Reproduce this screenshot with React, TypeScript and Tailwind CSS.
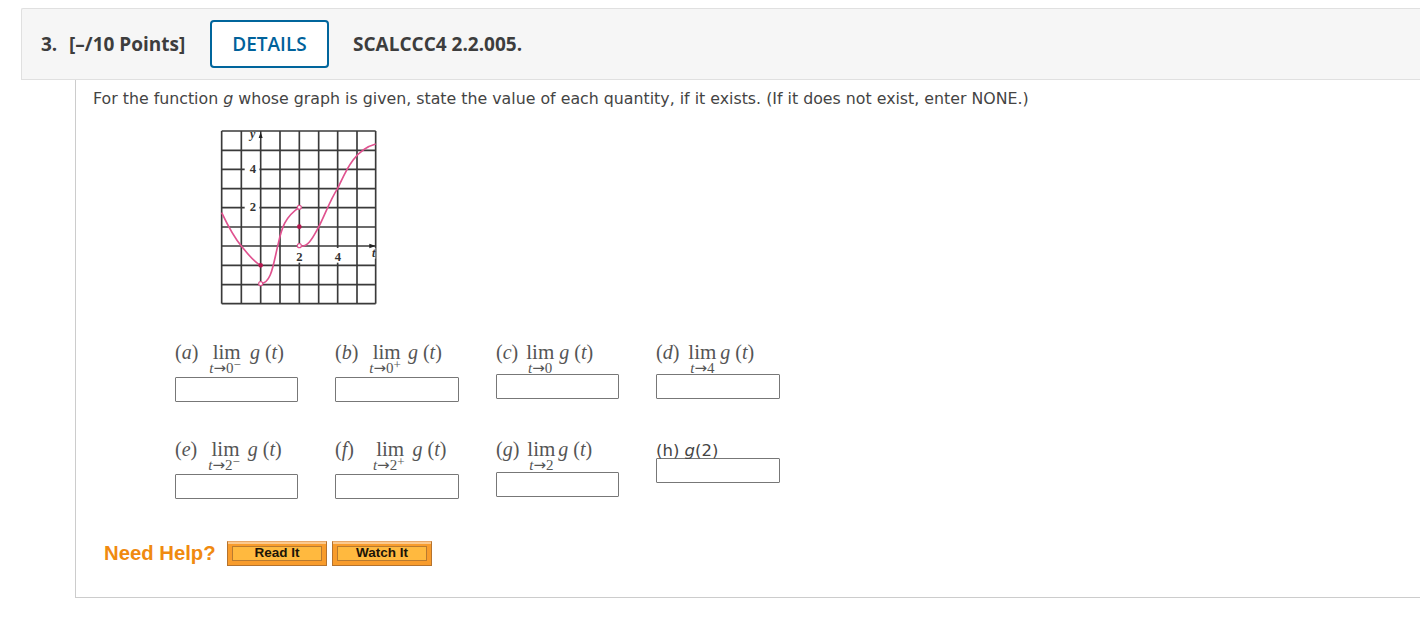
import React from 'react';

const serif = 'font-["Liberation_Serif",serif] text-[#555]';

const GraphOfG = () => {
  const xs = [35, 94, 152, 210, 268, 326, 383, 441, 497];
  const ys = [33, 91, 148, 206, 263, 321, 378, 436, 494, 551];
  return (
    <svg width="180" height="195" viewBox="0 0 540 585" className="block">
      {xs.map((x) => (
        <line key={x} x1={x} x2={x} y1="33" y2="551" stroke="#3a3a3a" strokeWidth="5" />
      ))}
      {ys.map((y) => (
        <line key={y} x1="35" x2="497" y1={y} y2={y} stroke="#3a3a3a" strokeWidth="5" />
      ))}
      <rect x="104" y="126" width="44" height="44" fill="#fff" />
      <rect x="104" y="241" width="44" height="44" fill="#fff" />
      <rect x="254" y="384" width="28" height="44" fill="#fff" />
      <rect x="369" y="384" width="28" height="44" fill="#fff" />
      <rect x="112" y="36" width="38" height="26" fill="#fff" />
      <rect x="476" y="384" width="20" height="32" fill="#fff" />
      <polygon points="152,36 146,54 158,54" fill="#222" />
      <polygon points="497,378 478,371 478,385" fill="#222" />
      <g fontFamily="Liberation Serif, serif" fill="#333" fontSize="38" fontWeight="bold">
        <text x="119" y="160">4</text>
        <text x="119" y="274">2</text>
        <text x="259" y="424">2</text>
        <text x="374" y="424">4</text>
        <text x="120" y="54" fontStyle="italic" fontSize="36">y</text>
        <text x="486" y="412" fontStyle="italic" fontSize="36">t</text>
      </g>
      <g fill="none" stroke="#e0528f" strokeWidth="5">
        <path d="M35 278 C55 320 70 350 94 378 C112 400 130 425 152 436" />
        <path d="M152 491 C185 490 190 430 205 370 C215 325 225 290 268 262" />
        <path d="M268 378 C295 384 310 350 326 321 C345 285 360 240 383 205 C405 160 430 90 497 72" />
      </g>
      <circle cx="152" cy="436" r="7" fill="#b5174f" />
      <circle cx="268" cy="320" r="7" fill="#b5174f" />
      <circle cx="152" cy="491" r="6" fill="#fff" stroke="#e0528f" strokeWidth="3.5" />
      <circle cx="268" cy="262" r="6" fill="#fff" stroke="#e0528f" strokeWidth="3.5" />
      <circle cx="268" cy="377" r="6" fill="#fff" stroke="#e0528f" strokeWidth="3.5" />
    </svg>
  );
};

const AnswerBox = ({ wide }: { wide?: boolean }) => (
  <div className={`${wide ? 'w-[124px]' : 'w-[123px]'} h-[25px] bg-white border border-[#777] rounded-[1px]`} />
);

type LimitProps = {
  letter: string;
  under: string;
  sup?: string;
  gapBefore: string;
  gapAfter: string;
};

const Limit = ({ letter, under, sup, gapBefore, gapAfter }: LimitProps) => (
  <div className={`flex items-start h-[42px] pt-[6px] ${serif} text-[20px] leading-[22px]`}>
    <span className="whitespace-pre">
      (<i>{letter}</i>)
    </span>
    <span className={`flex flex-col items-center ${gapBefore}`}>
      <span className="text-[21px]">lim</span>
      <span className="text-[15px] leading-[10px] whitespace-pre">
        <i>t</i>
        <span className="font-['DejaVu_Sans',sans-serif]">→</span>
        {under}
        {sup && <span className="text-[13px] relative -top-[4px] mr-[3px]">{sup}</span>}
      </span>
    </span>
    <span className={`whitespace-pre ${gapAfter}`}>
      <i>g</i> (<i>t</i>)
    </span>
  </div>
);

const HelpButton = ({ label }: { label: string }) => (
  <div className="w-[100px] h-[25px] border border-[#b5732e] bg-[#f89c2c] border-t-[#e8a868] p-[4px] shadow-[inset_0_2px_0_#fbc98e]">
    <div className="h-full border border-[#b87a30] bg-[#ffb93f] flex items-center justify-center font-['Liberation_Sans',sans-serif] font-bold text-[13.5px] text-[#1c1408]">
      {label}
    </div>
  </div>
);

export default function App() {
  return (
    <div className="w-[1420px] h-[642px] overflow-hidden bg-white pt-2 pl-[21px] font-['Open_Sans',sans-serif]">
      <div className="h-[72px] bg-[#f6f6f6] border border-[#e0e0e0] border-r-0 rounded-tl-[2px] flex items-center pl-[19px] text-[#3d3d3d] text-[19px] font-bold">
        <span className="w-[28px]">3.</span>
        <span className="w-[141px] whitespace-nowrap">[–/10 Points]</span>
        <div className="w-[119px] h-[48px] border-2 border-[#00659c] rounded-[4px] bg-white flex items-center justify-center text-[#00629b] text-[19px] font-semibold">
          DETAILS
        </div>
        <span className="ml-[24px] whitespace-nowrap">SCALCCC4 2.2.005.</span>
      </div>

      <div className="ml-[54px] h-[518px] border-l border-b border-[#ccc] pl-[18px] pt-[8px]">
        <p className="font-['DejaVu_Sans',sans-serif] text-[#444] text-[15.8px] leading-[22px] whitespace-nowrap -ml-[1px]">
          For the function <i>g</i> whose graph is given, state the value of each quantity, if it exists. (If it does not exist, enter NONE.)
        </p>

        <div className="ml-[116px] mt-[10px]">
          <GraphOfG />
        </div>

        <div className="ml-[81px] mt-[20px] flex h-[97px]">
          <div className="w-[160px]">
            <Limit letter="a" under="0" sup="−" gapBefore="ml-[11px]" gapAfter="ml-[6px]" />
            <AnswerBox />
          </div>
          <div className="w-[161px]">
            <Limit letter="b" under="0" sup="+" gapBefore="ml-[11px]" gapAfter="ml-[4px]" />
            <AnswerBox wide />
          </div>
          <div className="w-[160px] -mt-[3px]">
            <div className="mt-[3px]">
              <Limit letter="c" under="0" gapBefore="ml-[8px]" gapAfter="ml-[5px]" />
            </div>
            <div className="-mt-[3px]">
              <AnswerBox />
            </div>
          </div>
          <div className="-mt-[3px]">
            <div className="mt-[3px]">
              <Limit letter="d" under="4" gapBefore="ml-[9px]" gapAfter="ml-[4px]" />
            </div>
            <div className="-mt-[3px]">
              <AnswerBox wide />
            </div>
          </div>
        </div>

        <div className="ml-[81px] flex h-[100px]">
          <div className="w-[160px]">
            <Limit letter="e" under="2" sup="−" gapBefore="ml-[11px]" gapAfter="ml-[5px]" />
            <AnswerBox />
          </div>
          <div className="w-[161px]">
            <Limit letter="f" under="2" sup="+" gapBefore="ml-[19px]" gapAfter="ml-[5px]" />
            <AnswerBox wide />
          </div>
          <div className="w-[160px]">
            <Limit letter="g" under="2" gapBefore="ml-[8px]" gapAfter="ml-[3px]" />
            <div className="-mt-[2px]">
              <AnswerBox />
            </div>
          </div>
          <div>
            <div className="h-[26px] pt-[12px] font-['DejaVu_Sans',sans-serif] text-[#444] text-[16.5px] leading-[14px]">
              (h) <i>g</i>(2)
            </div>
            <AnswerBox wide />
          </div>
        </div>

        <div className="ml-[10px] flex items-center mt-[6px]">
          <span className="w-[123px] font-['Liberation_Sans',sans-serif] font-bold text-[20.3px] text-[#f08a10] whitespace-nowrap">Need Help?</span>
          <HelpButton label="Read It" />
          <div className="ml-[5px]">
            <HelpButton label="Watch It" />
          </div>
        </div>
      </div>
    </div>
  );
}
